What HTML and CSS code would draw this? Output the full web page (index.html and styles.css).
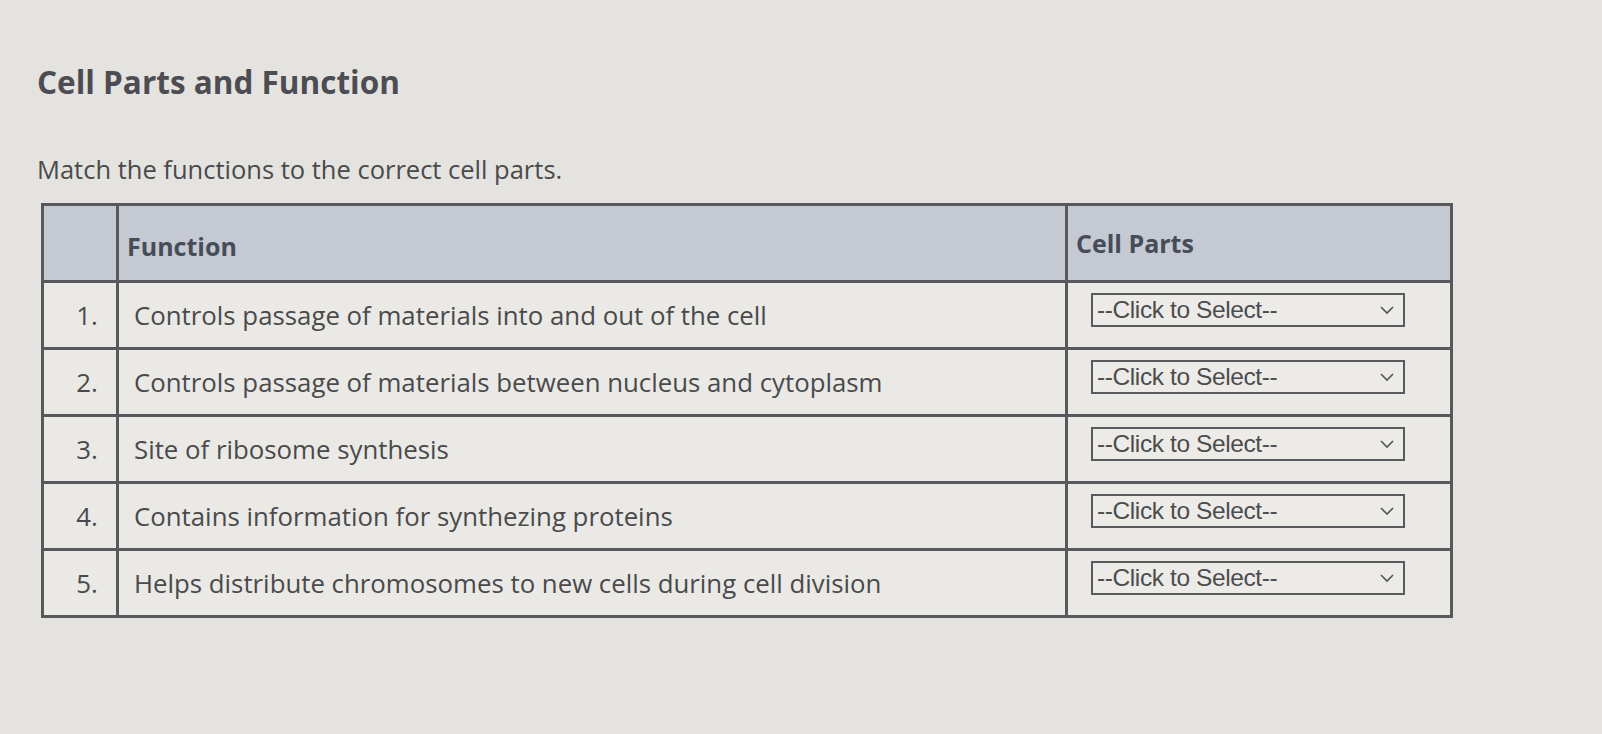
FILE: index.html
```html
<!DOCTYPE html>
<html>
<head>
<meta charset="utf-8">
<link rel="stylesheet" href="styles.css">
</head>
<body>
<div class="page">
  <h1 class="title">Cell Parts and Function</h1>
  <p class="intro">Match the functions to the correct cell parts.</p>
  <table class="grid">
    <thead>
      <tr class="head-row">
        <th class="num"></th>
        <th class="func-h">Function</th>
        <th class="part-h">Cell Parts</th>
      </tr>
    </thead>
    <tbody>
      <tr><td class="num">1.</td><td class="func">Controls passage of materials into and out of the cell</td><td class="part"><div class="select"><span>--Click to Select--</span><svg width="16" height="10" viewBox="0 0 16 10"><path d="M2 2 L8 8 L14 2" fill="none" stroke="#555" stroke-width="1.6"/></svg></div></td></tr>
      <tr><td class="num">2.</td><td class="func">Controls passage of materials between nucleus and cytoplasm</td><td class="part"><div class="select"><span>--Click to Select--</span><svg width="16" height="10" viewBox="0 0 16 10"><path d="M2 2 L8 8 L14 2" fill="none" stroke="#555" stroke-width="1.6"/></svg></div></td></tr>
      <tr><td class="num">3.</td><td class="func">Site of ribosome synthesis</td><td class="part"><div class="select"><span>--Click to Select--</span><svg width="16" height="10" viewBox="0 0 16 10"><path d="M2 2 L8 8 L14 2" fill="none" stroke="#555" stroke-width="1.6"/></svg></div></td></tr>
      <tr><td class="num">4.</td><td class="func">Contains information for synthezing proteins</td><td class="part"><div class="select"><span>--Click to Select--</span><svg width="16" height="10" viewBox="0 0 16 10"><path d="M2 2 L8 8 L14 2" fill="none" stroke="#555" stroke-width="1.6"/></svg></div></td></tr>
      <tr><td class="num">5.</td><td class="func">Helps distribute chromosomes to new cells during cell division</td><td class="part"><div class="select"><span>--Click to Select--</span><svg width="16" height="10" viewBox="0 0 16 10"><path d="M2 2 L8 8 L14 2" fill="none" stroke="#555" stroke-width="1.6"/></svg></div></td></tr>
    </tbody>
  </table>
</div>
</body>
</html>
```
FILE: styles.css
```css
html, body {
  margin: 0;
  padding: 0;
}
body {
  background: #e4e3df;
  font-family: "Open Sans", "Lato", sans-serif;
  color: #4a4a4c;
}
.page {
  padding: 62px 0 0 37px;
}
.title {
  margin: 0;
  font-size: 31.5px;
  font-weight: 700;
  color: #4d4c52;
  line-height: 40px;
}
.intro {
  margin: 51px 0 0 0;
  font-size: 25.5px;
  line-height: 32px;
  color: #4a4a4c;
}
.grid {
  margin-top: 18px;
  margin-left: 4px;
  border-collapse: collapse;
  width: 1412px;
  background: #eae9e5;
}
.grid th, .grid td {
  border: 3px solid #59595d;
  padding: 0;
}
.head-row {
  height: 77px;
}
.grid tbody tr {
  height: 67px;
}
.grid thead th {
  background: #c4c9d2;
  color: #464c58;
  font-size: 25px;
  font-weight: 700;
  text-align: left;
}
.grid th.num {
  width: 72px;
}
.func-h {
  padding: 6px 0 0 8px !important;
  width: 938px;
}
.part-h {
  padding: 0 0 0 8px !important;
}
.grid tbody td {
  font-size: 25.8px;
  color: #4a4a4c;
}
.grid td.num {
  text-align: center;
  padding-left: 14px !important;
}
.func {
  padding-left: 15px !important;
}
.part {
  vertical-align: top;
  padding: 10px 0 0 23px !important;
}
.select {
  width: 298px;
  height: 30px;
  border: 2px solid #5a5a5e;
  display: flex;
  align-items: center;
  justify-content: space-between;
  padding: 0 8px 0 4px;
  box-sizing: content-box;
  background: #ecebe7;
  font-family: "Liberation Sans", Arial, sans-serif;
  font-size: 24.5px;
  color: #4c4c4f;
  letter-spacing: -0.4px;
}
.select svg {
  display: block;
}
```
